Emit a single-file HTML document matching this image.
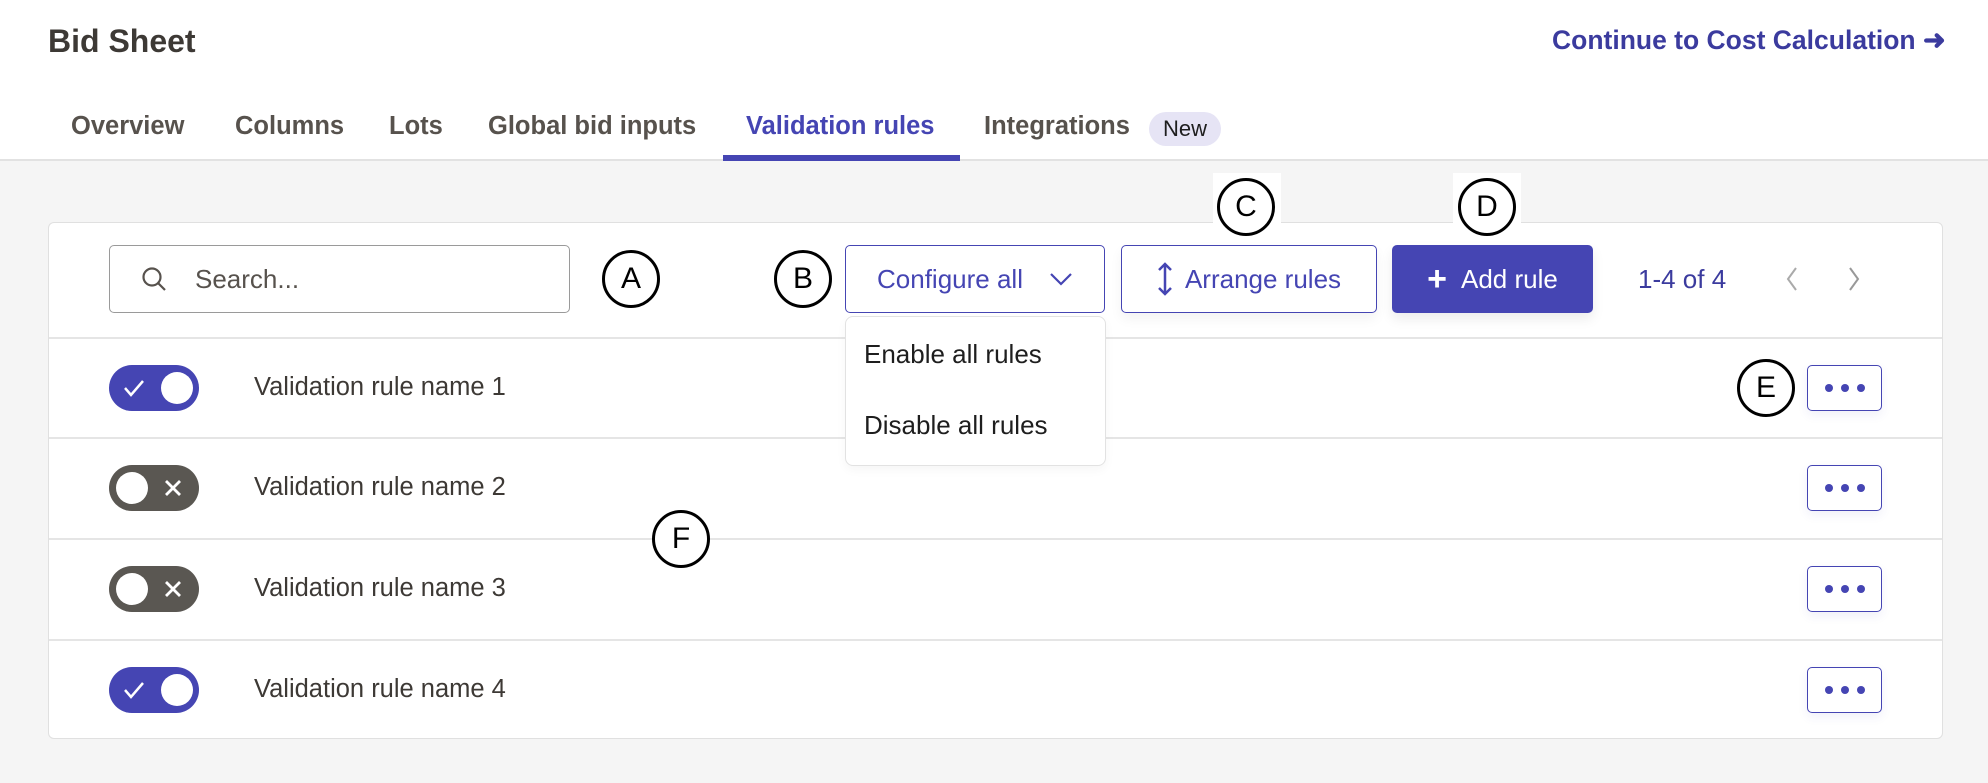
<!DOCTYPE html>
<html><head><meta charset="utf-8"><style>
*{box-sizing:border-box;margin:0;padding:0}
body{width:1988px;height:783px;overflow:hidden;background:#f5f5f5;font-family:"Liberation Sans",sans-serif;position:relative;color:#3d3935}
.a{position:absolute}
.hdr{left:0;top:0;width:1988px;height:161px;background:#fff;border-bottom:2px solid #e2e2e2}
.tab{position:absolute;top:111px;font-size:25.5px;font-weight:bold;color:#57524d;line-height:30px}
.card{left:48px;top:222px;width:1895px;height:517px;background:#fff;border:1px solid #e0e0e0;border-radius:6px}
.btn{position:absolute;top:245px;height:68px;border:1.5px solid #4545b3;border-radius:5px;color:#4545b3;font-size:26px;display:flex;align-items:center;justify-content:center;background:#fff}
.line{position:absolute;left:49px;width:1893px;height:2px;background:#e5e5e5}
.row{position:absolute;left:254px;font-size:25.5px;color:#3d3935}
.tog{position:absolute;left:109px;width:90px;height:46px;border-radius:23px}
.tog .k{position:absolute;top:7px;width:32px;height:32px;border-radius:50%;background:#fff}
.more{position:absolute;left:1807px;width:75px;height:46px;border:1.5px solid #4545b3;border-radius:5px;background:#fff;box-shadow:0 4px 10px rgba(69,69,179,.08);display:flex;align-items:center;justify-content:center;gap:8px}
.more i{width:8px;height:8px;border-radius:50%;background:#4545b3;display:block}
.c{position:absolute;width:58px;height:58px;border:3px solid #000;border-radius:50%;background:#fff;font-size:30px;color:#000;display:flex;align-items:center;justify-content:center}
</style></head><body>
<div class="a hdr"></div>
<div class="a" style="left:48px;top:23px;font-size:32px;font-weight:bold;color:#3d3935">Bid Sheet</div>
<div class="a" style="left:1552px;top:25px;font-size:26.5px;font-weight:bold;color:#3b3b9e">Continue to Cost Calculation <span style="font-size:27px">&#10140;</span></div>
<div class="tab" style="left:71px">Overview</div>
<div class="tab" style="left:235px">Columns</div>
<div class="tab" style="left:389px">Lots</div>
<div class="tab" style="left:488px">Global bid inputs</div>
<div class="tab" style="left:746px;color:#4545b3">Validation rules</div>
<div class="tab" style="left:984px">Integrations</div>
<div class="a" style="left:1149px;top:112px;width:72px;height:34px;border-radius:17px;background:#e6e4f5;font-size:22px;color:#1e1e1e;text-align:center;line-height:34px">New</div>
<div class="a" style="left:723px;top:155px;width:237px;height:6px;background:#4545b3"></div>

<div class="a card"></div>
<div class="a" style="left:109px;top:245px;width:461px;height:68px;border:1.5px solid #9a9a9a;border-radius:5px;background:#fff"></div>
<svg class="a" style="left:140px;top:265px" width="30" height="30" viewBox="0 0 30 30"><circle cx="12" cy="12" r="8.5" fill="none" stroke="#57524d" stroke-width="2.2"/><path d="M18 18l7 7" stroke="#57524d" stroke-width="2.2"/></svg>
<div class="a" style="left:195px;top:264px;font-size:26px;color:#57524d">Search...</div>

<div class="btn" style="left:845px;width:260px"><span>Configure all</span><svg style="margin-left:26px" width="24" height="14" viewBox="0 0 24 14"><path d="M2 2l10 10 10-10" fill="none" stroke="#4545b3" stroke-width="2.2"/></svg></div>
<div class="btn" style="left:1121px;width:256px;box-shadow:0 6px 12px rgba(0,0,0,.05)"><svg width="16" height="34" viewBox="0 0 16 34" style="margin-right:12px"><path d="M8 2v30M2 8l6-6 6 6M2 26l6 6 6-6" fill="none" stroke="#4545b3" stroke-width="2.5"/></svg><span>Arrange rules</span></div>
<div class="btn" style="left:1392px;width:201px;background:#4545b3;color:#fff;box-shadow:0 6px 12px rgba(0,0,0,.08)"><span style="font-size:34px;margin-right:14px;font-weight:bold">+</span><span>Add rule</span></div>
<div class="a" style="left:1638px;top:264px;font-size:26px;color:#3b3b9e">1-4 of 4</div>
<svg class="a" style="left:1784px;top:266px" width="16" height="26" viewBox="0 0 16 26"><path d="M12 2L4 13l8 11" fill="none" stroke="#aaa" stroke-width="2"/></svg>
<svg class="a" style="left:1846px;top:266px" width="16" height="26" viewBox="0 0 16 26"><path d="M4 2l8 11-8 11" fill="none" stroke="#999" stroke-width="2"/></svg>

<div class="line" style="top:337px"></div>
<div class="line" style="top:437px"></div>
<div class="line" style="top:538px"></div>
<div class="line" style="top:639px"></div>

<div class="tog" style="top:365px;background:#4545b3"><svg class="a" style="left:14px;top:13px" width="22" height="20" viewBox="0 0 22 20"><path d="M2 10l6 7L20 3" fill="none" stroke="#fff" stroke-width="2.5"/></svg><div class="k" style="left:52px"></div></div>
<div class="tog" style="top:465px;background:#5a5752"><div class="k" style="left:7px"></div><svg class="a" style="left:55px;top:14px" width="18" height="18" viewBox="0 0 18 18"><path d="M2 2l14 14M16 2L2 16" stroke="#fff" stroke-width="2.8"/></svg></div>
<div class="tog" style="top:566px;background:#5a5752"><div class="k" style="left:7px"></div><svg class="a" style="left:55px;top:14px" width="18" height="18" viewBox="0 0 18 18"><path d="M2 2l14 14M16 2L2 16" stroke="#fff" stroke-width="2.8"/></svg></div>
<div class="tog" style="top:667px;background:#4545b3"><svg class="a" style="left:14px;top:13px" width="22" height="20" viewBox="0 0 22 20"><path d="M2 10l6 7L20 3" fill="none" stroke="#fff" stroke-width="2.5"/></svg><div class="k" style="left:52px"></div></div>

<div class="row" style="top:373px">Validation rule name 1</div>
<div class="row" style="top:473px">Validation rule name 2</div>
<div class="row" style="top:574px">Validation rule name 3</div>
<div class="row" style="top:675px">Validation rule name 4</div>

<div class="more" style="top:365px"><i></i><i></i><i></i></div>
<div class="more" style="top:465px"><i></i><i></i><i></i></div>
<div class="more" style="top:566px"><i></i><i></i><i></i></div>
<div class="more" style="top:667px"><i></i><i></i><i></i></div>

<div class="a" style="left:845px;top:316px;width:261px;height:150px;background:#fff;border:1.5px solid #e2e2e2;border-radius:8px;box-shadow:0 4px 10px rgba(0,0,0,.04)"></div>
<div class="a" style="left:864px;top:339px;font-size:26px;color:#1e1e1e">Enable all rules</div>
<div class="a" style="left:864px;top:410px;font-size:26px;color:#1e1e1e">Disable all rules</div>

<div class="a" style="left:1213px;top:173px;width:68px;height:62px;background:#fff"></div>
<div class="a" style="left:1453px;top:173px;width:68px;height:62px;background:#fff"></div>
<div class="c" style="left:602px;top:250px">A</div>
<div class="c" style="left:774px;top:250px">B</div>
<div class="c" style="left:1217px;top:178px">C</div>
<div class="c" style="left:1458px;top:178px">D</div>
<div class="c" style="left:1737px;top:359px">E</div>
<div class="c" style="left:652px;top:510px">F</div>
</body></html>
